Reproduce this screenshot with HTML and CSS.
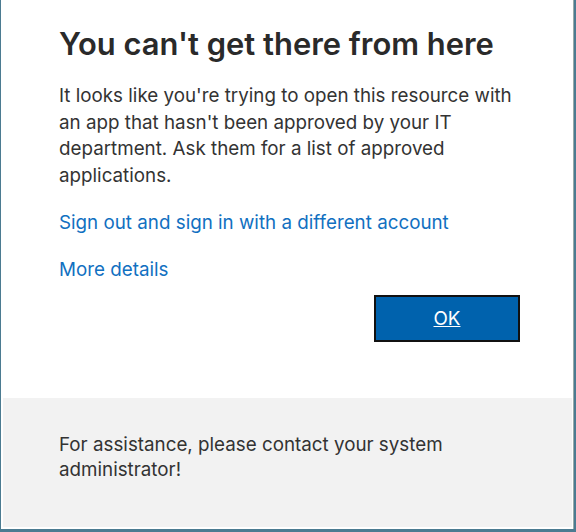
FILE: index.html
```html
<!DOCTYPE html>
<html>
<head>
<meta charset="utf-8">
<link rel="stylesheet" href="styles.css">
</head>
<body>
<div class="dialog">
  <div class="main">
    <h1 class="title">You can't get there from here</h1>
    <p class="text">It looks like you're trying to open this resource with an app that hasn't been approved by your IT department. Ask them for a list of approved applications.</p>
    <a class="link link-first" href="#">Sign out and sign in with a different account</a>
    <a class="link" href="#">More details</a>
    <div class="actions">
      <button class="ok">OK</button>
    </div>
  </div>
  <div class="footer">
    <p class="footer-text">For assistance, please contact your system administrator!</p>
  </div>
</div>
</body>
</html>
```
FILE: styles.css
```css
html, body {
  margin: 0;
  padding: 0;
  height: 100%;
}
body {
  background: #4b7b91;
  font-family: Inter, "Liberation Sans", Arial, sans-serif;
  color: #333;
  padding: 0 2px 3px 1px;
  box-sizing: border-box;
}
.dialog {
  height: 100%;
  background: #fff;
  border-right: 1px solid #9aa;
  padding: 0 1px 2px 2px;
  box-sizing: border-box;
  display: flex;
  flex-direction: column;
}
.main {
  padding: 25px 52px 0 56px;
  height: 398px;
  box-sizing: border-box;
  display: flex;
  flex-direction: column;
  align-items: flex-start;
}
.title {
  margin: 0;
  font-size: 30.9px;
  font-weight: 600;
  line-height: 38px;
  color: #2a2a2a;
}
.text {
  margin: 20px 0 0;
  font-size: 18.8px;
  line-height: 26.7px;
  color: #333;
}
.link {
  font-size: 18.8px;
  line-height: 26.6px;
  color: #1170c1;
  text-decoration: none;
}
.link-first {
  margin-top: 20px;
}
.link + .link {
  margin-top: 21px;
}
.actions {
  align-self: stretch;
  display: flex;
  justify-content: flex-end;
  margin-top: 11px;
}
.ok {
  width: 146px;
  height: 47px;
  background: #0062ad;
  border: 2px solid #111;
  color: #fff;
  font-family: Inter, "Liberation Sans", Arial, sans-serif;
  font-size: 18.8px;
  text-decoration: underline;
  margin-right: 0;
}
.footer {
  flex: 1;
  background: #f2f2f2;
  padding: 34px 52px 0 56px;
}
.footer-text {
  margin: 0;
  font-size: 18.8px;
  line-height: 25px;
  color: #333;
}
```
